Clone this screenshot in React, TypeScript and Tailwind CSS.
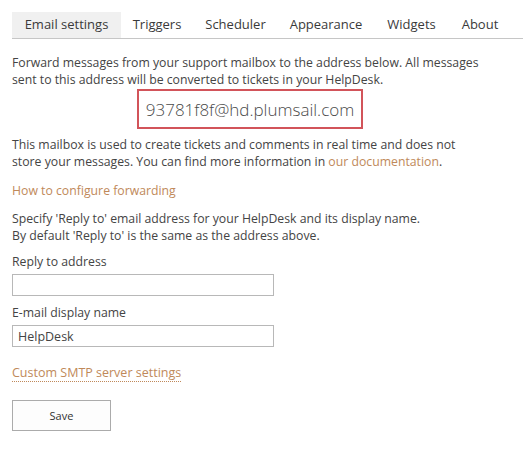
const tabs = [
  { label: "Email settings", w: "w-[109px]", active: true },
  { label: "Triggers", w: "w-[72px]" },
  { label: "Scheduler", w: "w-[85px]" },
  { label: "Appearance", w: "w-[96px]" },
  { label: "Widgets", w: "w-[75px]" },
  { label: "About", w: "w-[62px]" },
]

export default function App() {
  return (
    <div className="min-h-[449px] bg-white pl-3 pt-3 text-[12.25px] text-[#444] font-['Segoe_UI','Open_Sans',sans-serif]">
      {/* Tabs */}
      <div className="flex h-[27px] border-b border-[#c6c6c6] text-[13px] text-[#3a3a3a]">
        {tabs.map((t) => (
          <div
            key={t.label}
            className={`${t.w} flex items-center justify-center ${t.active ? "bg-[#f0f0f0]" : ""}`}
          >
            {t.label}
          </div>
        ))}
      </div>

      <div className="w-[476px] leading-[17px]">
        <p className="mt-[15px] whitespace-nowrap">
          Forward messages from your support mailbox to the address below. All messages
          <br />
          sent to this address will be converted to tickets in your HelpDesk.
        </p>

        <div className="mt-px flex justify-center">
          <div className="flex h-[40px] w-[226px] items-center justify-center border-2 border-[#d2545a] text-[17px] font-light text-[#4a4a4a]">
            93781f8f@hd.plumsail.com
          </div>
        </div>

        <p className="mt-[7px] whitespace-nowrap">
          This mailbox is used to create tickets and comments in real time and does not
          <br />
          store your messages. You can find more information in{" "}
          <a className="text-[#c0895a]">our documentation</a>.
        </p>

        <p className="mt-[12px]">
          <a className="text-[#c0895a]">How to configure forwarding</a>
        </p>

        <p className="mt-[11px] whitespace-nowrap">
          Specify 'Reply to' email address for your HelpDesk and its display name.
          <br />
          By default 'Reply to' is the same as the address above.
        </p>

        <label className="mt-[9px] block">Reply to address</label>
        <input
          className="mt-[4px] block h-[22px] w-[262px] border border-[#b8b8b8] px-[5px] text-[12.5px] text-[#444] outline-none"
          defaultValue=""
        />

        <label className="mt-[8px] block">E-mail display name</label>
        <input
          className="mt-[4px] block h-[22px] w-[262px] border border-[#b8b8b8] px-[5px] text-[12.5px] text-[#444] outline-none"
          defaultValue="HelpDesk"
        />

        <div className="mt-[17px]">
          <a className="border-b border-dotted border-[#c0895a] text-[12.5px] text-[#c0895a]">
            Custom SMTP server settings
          </a>
        </div>

        <button className="mt-[19px] block h-[31px] w-[99px] border border-[#ababab] bg-[#fdfdfd] text-[11px] text-[#333]">
          Save
        </button>
      </div>
    </div>
  )
}
